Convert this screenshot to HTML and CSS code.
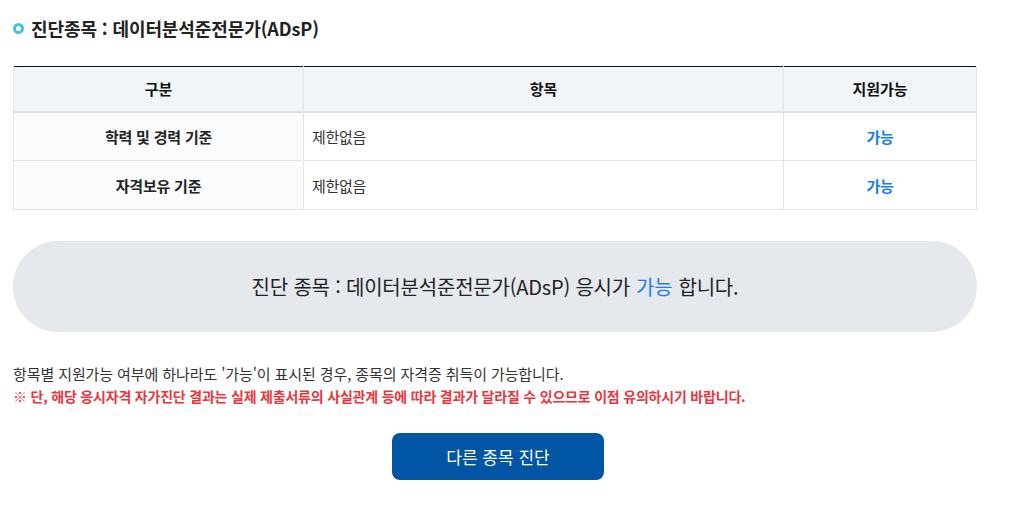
FILE: index.html
```html
<!DOCTYPE html>
<html lang="ko">
<head>
    <meta charset="UTF-8">
    <meta name="viewport" content="width=device-width, initial-scale=1.0">
    <title>자가진단 결과</title>
    <link rel="stylesheet" href="styles.css">
</head>
<body>
    <main class="container">
        <!-- 진단 종목 -->
        <h2 class="sub-title"><span class="dot"></span>진단종목 : 데이터분석준전문가(ADsP)</h2>

        <!-- 결과 표 -->
        <table class="result-table">
            <colgroup>
                <col style="width: 290px;">
                <col>
                <col style="width: 193px;">
            </colgroup>
            <thead>
                <tr>
                    <th>구분</th>
                    <th>항목</th>
                    <th>지원가능</th>
                </tr>
            </thead>
            <tbody>
                <tr>
                    <th>학력 및 경력 기준</th>
                    <td>제한없음</td>
                    <td class="ok">가능</td>
                </tr>
                <tr>
                    <th>자격보유 기준</th>
                    <td>제한없음</td>
                    <td class="ok">가능</td>
                </tr>
            </tbody>
        </table>

        <!-- 결과 안내 -->
        <div class="result-box">
            진단 종목 : 데이터분석준전문가(ADsP) 응시가 <span class="blue">가능</span> 합니다.
        </div>

        <div class="notice">
            <p>항목별 지원가능 여부에 하나라도 '가능'이 표시된 경우, 종목의 자격증 취득이 가능합니다.</p>
            <p class="warn">※ 단, 해당 응시자격 자가진단 결과는 실제 제출서류의 사실관계 등에 따라 결과가 달라질 수 있으므로 이점 유의하시기 바랍니다.</p>
        </div>

        <div class="btn-area">
            <button type="button" class="btn">다른 종목 진단</button>
        </div>
    </main>
</body>
</html>
```

FILE: styles.css
```css
body {
    font-family: 'Noto Sans CJK KR', 'Noto Sans', sans-serif;
    margin: 0;
    padding: 0;
    background: #fff;
    color: #222;
}
.container {
    width: 964px;
    padding: 13px 0 0 13px;
}
.sub-title {
    display: flex;
    align-items: center;
    margin: 0;
    height: 30px;
    font-size: 18px;
    font-weight: 700;
    color: #222;
    letter-spacing: -0.1px;
}
.dot {
    width: 5px;
    height: 5px;
    border: 3.5px solid #45c3da;
    border-radius: 50%;
    margin-right: 7px;
}
.result-table {
    width: 100%;
    margin-top: 23px;
    border-collapse: collapse;
    border-top: 1px solid #111;
    font-size: 15px;
    table-layout: fixed;
}
.result-table th,
.result-table td {
    border: 1px solid #e1e4e8;
    height: 49px;
    padding: 0 8px;
    box-sizing: border-box;
}
.result-table thead th {
    height: 45px;
    background-color: #f2f5f7;
    border-top: none;
    border-bottom: 2px solid #dde0e5;
    font-weight: 700;
    color: #111;
}
.result-table tbody th {
    background-color: #fafbfc;
    font-weight: 700;
    color: #222;
    letter-spacing: -0.2px;
}
.result-table td {
    color: #333;
    letter-spacing: -0.3px;
}
.result-table td.ok {
    text-align: center;
    font-weight: 700;
    color: #1a7ef2;
}
.result-box {
    margin-top: 31px;
    height: 91px;
    border-radius: 45px;
    background-color: #e5e9ee;
    display: flex;
    align-items: center;
    justify-content: center;
    font-size: 20px;
    color: #222;
    letter-spacing: -0.2px;
}
.blue {
    color: #1a7ef2;
    margin: 0 6px;
}
.notice {
    margin-top: 30px;
}
.notice p {
    margin: 0;
    font-size: 15px;
    line-height: 23px;
    color: #333;
    letter-spacing: -0.1px;
}
.notice p.warn {
    font-size: 14px;
    font-weight: 700;
    color: #e8363d;
    letter-spacing: -0.2px;
}
.btn-area {
    display: flex;
    justify-content: center;
    margin-top: 25px;
}
.btn {
    width: 212px;
    height: 47px;
    margin-left: 6px;
    border: none;
    border-radius: 8px;
    background-color: #0055a5;
    color: #fff;
    font-family: inherit;
    font-size: 17px;
    cursor: pointer;
}
```
